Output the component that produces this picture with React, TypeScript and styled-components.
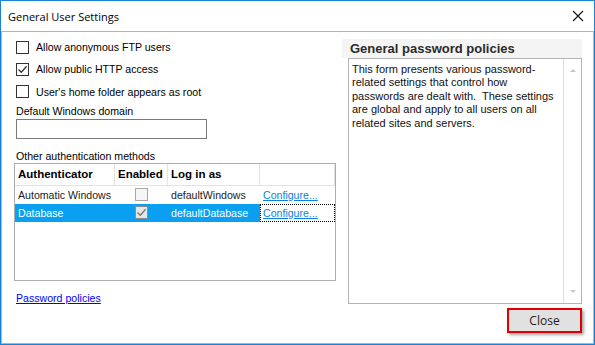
import React from 'react';
import styled, { createGlobalStyle } from 'styled-components';

const Global = createGlobalStyle`
  html, body { margin:0; padding:0; background:#fff; }
  body { font-family:"Liberation Sans", Arial, sans-serif; font-size:11px; color:#000; }
  * { box-sizing:border-box; }
`;

const Window = styled.div`
  width:595px;
  height:345px;
  border:1px solid #1883d7;
  display:flex;
  flex-direction:column;
  background:#fff;
`;

const TitleBar = styled.div`
  height:30px;
  display:flex;
  align-items:center;
  justify-content:space-between;
  padding:0 0 0 7px;
  font-family:"Open Sans", "Noto Sans", sans-serif;
  font-size:11px;
  color:#000;
`;

const CloseX = styled.div`
  width:32px;
  height:30px;
  display:flex;
  align-items:center;
  justify-content:center;
`;

const Body = styled.div`
  flex:1;
  border:1px solid #b4b4b4;
  display:flex;
  flex-direction:column;
  padding:4px 10px 10px 12px;
`;

const Columns = styled.div`
  display:grid;
  grid-template-columns:322px 234px;
  column-gap:12px;
  flex:1;
`;

const LeftCol = styled.div`
  display:flex;
  flex-direction:column;
  font-size:10.6px;
`;

const CheckRow = styled.label`
  display:flex;
  align-items:center;
  gap:7px;
  height:22.3px;
  padding-left:2px;
`;

const Box = styled.span`
  width:13px;
  height:13px;
  border:1px solid #333;
  background:#fff;
  display:inline-flex;
  align-items:center;
  justify-content:center;
`;

const FieldLabel = styled.div`
  padding-left:2px;
  height:16px;
  display:flex;
  align-items:center;
  color:#000;
`;

const TextInput = styled.div`
  margin:0 0 0 2px;
  width:191px;
  height:20px;
  border:1px solid #7a7a7a;
  background:#fff;
`;

const SectionLabel = styled(FieldLabel)`
  margin-top:9px;
`;

const Table = styled.div`
  margin-top:-1px;
  border:1px solid #adadad;
  height:118px;
  display:flex;
  flex-direction:column;
`;

const Row = styled.div<{ $selected?: boolean; $header?: boolean }>`
  display:grid;
  grid-template-columns:100px 53px 92px 1fr;
  height:${p => (p.$header ? '22px' : '18px')};
  background:${p => (p.$selected ? '#0a9ff0' : '#fff')};
  color:${p => (p.$selected ? '#fff' : '#222')};
  ${p => p.$header && 'border-bottom:1px solid #e3e3e3; font-weight:bold; color:#000;'}
`;

const Cell = styled.div<{ $center?: boolean; $header?: boolean }>`
  display:flex;
  align-items:center;
  justify-content:${p => (p.$center ? 'center' : 'flex-start')};
  padding:0 3px;
  white-space:nowrap;
  overflow:hidden;
  ${p => p.$header && 'border-right:1px solid #e3e3e3; font-size:11.5px;'}
`;

const LinkCell = styled(Cell)<{ $focus?: boolean }>`
  padding:0 2px;
  border:1px dotted ${p => (p.$focus ? '#000' : 'transparent')};
  background:#fff;
`;

const Configure = styled.span`
  color:#0a84e0;
  text-decoration:underline;
`;

const GridBox = styled.span<{ $checked?: boolean }>`
  width:13px;
  height:13px;
  border:1px solid ${p => (p.$checked ? '#8c8c8c' : '#a8a8a8')};
  background:${p => (p.$checked ? '#e6e6e6' : '#f6f6f6')};
  display:inline-flex;
  align-items:center;
  justify-content:center;
`;

const Link = styled.a`
  margin-top:auto;
  margin-left:2px;
  margin-bottom:-2px;
  color:#0000ff;
  text-decoration:underline;
  height:14px;
`;

const RightCol = styled.div`
  display:flex;
  flex-direction:column;
  padding-top:3px;
`;

const PanelTitle = styled.div`
  height:19px;
  background:#f4f4f4;
  font-weight:bold;
  font-size:13px;
  padding-left:8px;
  margin-left:-6px;
  display:flex;
  align-items:center;
  color:#2b2b2b;
`;

const TextArea = styled.div`
  flex:1;
  border:1px solid #b4b4b4;
  display:flex;
  background:#fff;
`;

const Para = styled.p`
  margin:0;
  padding:4px 4px 3px 3px;
  flex:1;
  line-height:13.4px;
  color:#111;
`;

const ScrollBar = styled.div`
  width:18px;
  border-left:1px solid #dcdcdc;
  display:flex;
  flex-direction:column;
  justify-content:space-between;
  align-items:center;
  padding:10px 0 10px;
`;

const Arrow = styled.span<{ $down?: boolean }>`
  width:0;
  height:0;
  border-left:3px solid transparent;
  border-right:3px solid transparent;
  ${p => (p.$down ? 'border-top:3px solid #c8c8c8;' : 'border-bottom:3px solid #c8c8c8;')}
`;

const Footer = styled.div`
  display:flex;
  justify-content:flex-end;
  padding:4px 1px 0 0;
`;

const CloseButton = styled.button`
  width:75px;
  height:25px;
  border:2px solid #e00000;
  background:#e1e1e1;
  box-shadow:2px 2px 3px rgba(0,0,0,0.35);
  font-family:"Open Sans", "Noto Sans", sans-serif;
  font-size:12px;
  color:#222;
  padding:0;
`;

function Check({ color = '#333' }: { color?: string }) {
  return (
    <svg width="11" height="11" viewBox="0 0 11 11">
      <path d="M1.5 5.5 L4.3 8.3 L9.6 2.3" fill="none" stroke={color} strokeWidth="1.3" />
    </svg>
  );
}

export default function App() {
  return (
    <Window>
      <Global />
      <TitleBar>
        <span>General User Settings</span>
        <CloseX>
          <svg width="12" height="12" viewBox="0 0 12 12">
            <path d="M1 1 L11 11 M11 1 L1 11" stroke="#111" strokeWidth="1.1" />
          </svg>
        </CloseX>
      </TitleBar>
      <Body>
        <Columns>
          <LeftCol>
            <CheckRow><Box /> Allow anonymous FTP users</CheckRow>
            <CheckRow><Box><Check /></Box> Allow public HTTP access</CheckRow>
            <CheckRow><Box /> User's home folder appears as root</CheckRow>
            <FieldLabel>Default Windows domain</FieldLabel>
            <TextInput />
            <SectionLabel>Other authentication methods</SectionLabel>
            <Table>
              <Row $header>
                <Cell $header>Authenticator</Cell>
                <Cell $header>Enabled</Cell>
                <Cell $header>Log in as</Cell>
                <Cell $header />
              </Row>
              <Row>
                <Cell>Automatic Windows</Cell>
                <Cell $center><GridBox /></Cell>
                <Cell>defaultWindows</Cell>
                <LinkCell><Configure>Configure...</Configure></LinkCell>
              </Row>
              <Row $selected>
                <Cell>Database</Cell>
                <Cell $center><GridBox $checked><Check color="#777" /></GridBox></Cell>
                <Cell>defaultDatabase</Cell>
                <LinkCell $focus><Configure>Configure...</Configure></LinkCell>
              </Row>
            </Table>
            <Link href="#">Password policies</Link>
          </LeftCol>
          <RightCol>
            <PanelTitle>General password policies</PanelTitle>
            <TextArea>
              <Para>
                This form presents various password-<br />
                related settings that control how<br />
                passwords are dealt with.&nbsp; These settings<br />
                are global and apply to all users on all<br />
                related sites and servers.
              </Para>
              <ScrollBar>
                <Arrow />
                <Arrow $down />
              </ScrollBar>
            </TextArea>
          </RightCol>
        </Columns>
        <Footer>
          <CloseButton>Close</CloseButton>
        </Footer>
      </Body>
    </Window>
  );
}
